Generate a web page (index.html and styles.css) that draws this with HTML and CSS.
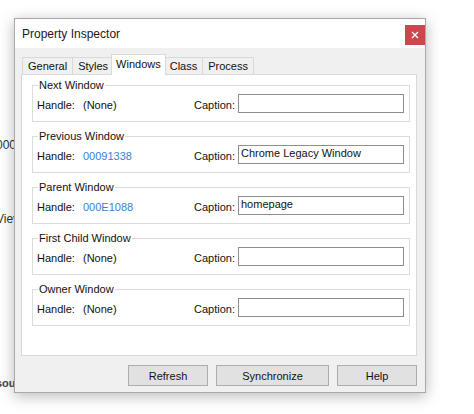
FILE: index.html
```html
<!DOCTYPE html>
<html>
<head>
<meta charset="utf-8">
<title>Property Inspector</title>
<link rel="stylesheet" href="styles.css">
</head>
<body>
<div class="desktop">
  <p class="bg-line l1">0000</p>
  <p class="bg-line l2">View</p>
  <p class="bg-line l3">source</p>
</div>
<div class="dialog">
  <div class="titlebar">
    <span class="title">Property Inspector</span>
    <button class="close" aria-label="Close"><svg width="8" height="8" viewBox="0 0 8 8"><path d="M1 1L7 7M7 1L1 7" stroke="#fff" stroke-width="1.4"/></svg></button>
  </div>
  <div class="content">
    <div class="tabs">
      <span class="tab">General</span>
      <span class="tab">Styles</span>
      <span class="tab active">Windows</span>
      <span class="tab">Class</span>
      <span class="tab">Process</span>
    </div>
    <div class="panel">
      <fieldset class="group">
        <legend>Next Window</legend>
        <div class="row">
          <span class="lbl">Handle:</span><span class="val">(None)</span>
          <span class="cap">Caption:</span><span class="input"></span>
        </div>
      </fieldset>
      <fieldset class="group">
        <legend>Previous Window</legend>
        <div class="row">
          <span class="lbl">Handle:</span><span class="val link">00091338</span>
          <span class="cap">Caption:</span><span class="input">Chrome Legacy Window</span>
        </div>
      </fieldset>
      <fieldset class="group">
        <legend>Parent Window</legend>
        <div class="row">
          <span class="lbl">Handle:</span><span class="val link">000E1088</span>
          <span class="cap">Caption:</span><span class="input">homepage</span>
        </div>
      </fieldset>
      <fieldset class="group">
        <legend>First Child Window</legend>
        <div class="row">
          <span class="lbl">Handle:</span><span class="val">(None)</span>
          <span class="cap">Caption:</span><span class="input"></span>
        </div>
      </fieldset>
      <fieldset class="group">
        <legend>Owner Window</legend>
        <div class="row">
          <span class="lbl">Handle:</span><span class="val">(None)</span>
          <span class="cap">Caption:</span><span class="input"></span>
        </div>
      </fieldset>
    </div>
    <div class="buttons">
      <button class="btn w80">Refresh</button>
      <button class="btn w113">Synchronize</button>
      <button class="btn w80">Help</button>
    </div>
  </div>
</div>
</body>
</html>
```

FILE: styles.css
```css
* { box-sizing: border-box; }
html, body { margin: 0; padding: 0; }
body {
  width: 474px;
  height: 414px;
  background: #ffffff;
  font-family: "Liberation Sans", Arial, sans-serif;
  font-size: 11px;
  color: #111;
  position: relative;
  overflow: hidden;
}
.desktop {
  padding-top: 138px;
  margin-left: -4px;
  font-size: 12px;
  color: #333;
}
.bg-line { margin: 0; line-height: 14px; }
.l2 { margin-top: 60px; }
.l3 { margin-top: 150px; font-weight: bold; color: #444; font-size: 11px; }

.dialog {
  position: absolute;
  left: 14px;
  top: 18px;
  width: 412px;
  height: 375px;
  background: #f0f0f0;
  border: 1px solid #a9a9a9;
  box-shadow: 0 3px 14px rgba(0,0,0,0.28);
}
.titlebar {
  height: 29px;
  background: #ffffff;
  display: flex;
  justify-content: space-between;
  align-items: center;
  padding-left: 7px;
}
.title { font-size: 12px; color: #1a1a1a; }
.close {
  align-self: flex-start;
  margin-top: 6px;
  width: 20px;
  height: 20px;
  border: 0;
  padding: 0;
  background: #cc474b;
  display: flex;
  align-items: center;
  justify-content: center;
}
.content { padding: 6px 8px 0 6px; }
.tabs {
  display: flex;
  align-items: flex-end;
  height: 21px;
  padding-left: 1px;
  position: relative;
  z-index: 1;
}
.tab {
  height: 17px;
  padding: 0 5px;
  line-height: 16px;
  background: #f0f0f0;
  border: 1px solid #d9d9d9;
  border-bottom: 0;
  margin-bottom: 1px;
  margin-right: -1px;
}
.tab.active {
  height: 21px;
  margin: 0 -2px 0 -2px;
  padding: 0 4px;
  line-height: 18px;
  background: #fff;
  position: relative;
  z-index: 2;
}
.panel {
  margin-top: -1px;
  height: 282px;
  background: #fff;
  border: 1px solid #d9d9d9;
  padding: 4px 6px 0 10px;
  display: flex;
  flex-direction: column;
  gap: 8px;
}
.group {
  margin: 0;
  padding: 0 5px 0 4px;
  border: 1px solid #dcdcdc;
  min-width: 0;
}
.group legend {
  margin-left: 1px;
  padding: 0 1px;
  line-height: 13px;
  color: #111;
}
.row {
  display: grid;
  grid-template-columns: 46px 1fr auto 166px;
  align-items: center;
  margin-top: 2px;
  margin-bottom: 8px;
}
.lbl, .val, .cap { padding-top: 2px; }
.val.link { color: #3a7ed3; }
.cap { margin-right: 3px; }
.input {
  height: 19px;
  border: 1px solid #8e8e8e;
  background: #fff;
  padding: 0 0 0 2px;
  line-height: 15px;
  font-size: 11px;
  color: #111;
}
.buttons {
  display: flex;
  justify-content: flex-end;
  gap: 8px;
  margin-top: 9px;
  padding-right: 0;
}
.btn {
  height: 21px;
  background: #e1e1e1;
  border: 1px solid #adadad;
  font-family: "Liberation Sans", Arial, sans-serif;
  font-size: 11px;
  color: #111;
  padding: 0;
}
.w80 { width: 80px; }
.w113 { width: 113px; }
```
